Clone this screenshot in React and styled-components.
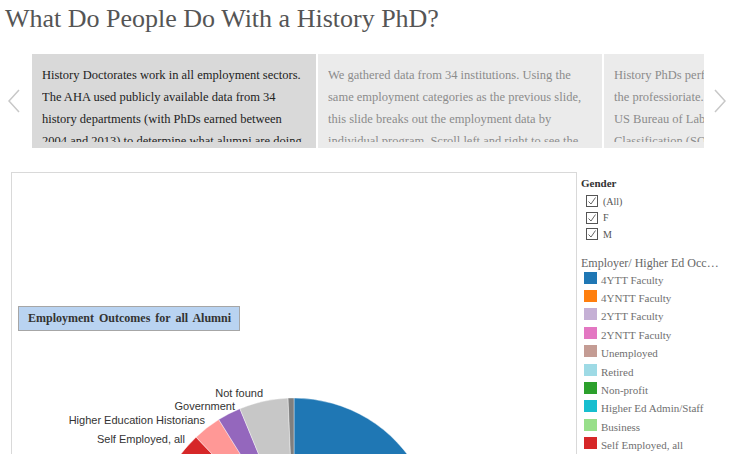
import React from "react";
import styled, { createGlobalStyle } from "styled-components";

const GlobalStyle = createGlobalStyle`
  html, body {
    margin: 0;
    padding: 0;
    height: 454px;
    overflow: hidden;
    background: #fff;
  }
  body {
    font-family: "Liberation Serif", "Times New Roman", serif;
  }
`;

const slides = [
  {
    active: true,
    lines: [
      "History Doctorates work in all employment sectors. The AHA used publicly available data from 34 history departments (with PhDs earned between 2004 and 2013) to determine what alumni are doing now.",
    ],
  },
  {
    lines: [
      "We gathered data from 34 institutions. Using the same employment categories as the previous slide, this slide breaks out the employment data by individual program. Scroll left and right to see the results.",
    ],
  },
  {
    lines: [
      "History PhDs perform a wide range of jobs outside",
      "the professioriate. Using categories from the",
      "US Bureau of Labor Statistics Standard Occupational",
      "Classification (SOC) system, we coded each job.",
    ],
  },
];

const legend = [
  { label: "4YTT Faculty", color: "#1f77b4" },
  { label: "4YNTT Faculty", color: "#ff7f0e" },
  { label: "2YTT Faculty", color: "#c5b0d5" },
  { label: "2YNTT Faculty", color: "#e377c2" },
  { label: "Unemployed", color: "#c49c94" },
  { label: "Retired", color: "#9edae5" },
  { label: "Non-profit", color: "#2ca02c" },
  { label: "Higher Ed Admin/Staff", color: "#17becf" },
  { label: "Business", color: "#98df8a" },
  { label: "Self Employed, all", color: "#d62728" },
  { label: "Higher Education Historians", color: "#ff9896" },
  { label: "Government", color: "#9467bd" },
  { label: "Not found", color: "#c7c7c7" },
  { label: "Other", color: "#7f7f7f" },
];

// slice sizes in degrees, clockwise from 12 o'clock, same order as legend
const sweeps = [125, 45, 15, 7, 4, 8, 18, 33, 35, 26.4, 11.6, 9.6, 20, 2.4];

const CX = 282;
const CY = 200;
const R = 142;

const point = (deg) => {
  const a = ((deg - 90) * Math.PI) / 180;
  return [CX + R * Math.cos(a), CY + R * Math.sin(a)];
};

const slicePath = (from, to) => {
  const [x1, y1] = point(from);
  const [x2, y2] = point(to);
  const large = to - from > 180 ? 1 : 0;
  return `M${CX},${CY} L${x1},${y1} A${R},${R} 0 ${large} 1 ${x2},${y2} Z`;
};

const Page = styled.div`
  width: 736px;
  height: 454px;
  overflow: hidden;
`;

const Title = styled.h1`
  margin: 0;
  padding: 4px 0 0 5px;
  font-size: 26px;
  line-height: 30px;
  font-weight: normal;
  color: #555;
`;

const Carousel = styled.div`
  display: flex;
  align-items: center;
  margin-top: 20px;
  height: 94px;
`;

const Arrow = styled.div`
  width: 32px;
  display: flex;
  justify-content: center;
  box-sizing: border-box;
  padding-right: ${(p) => (p.$left ? "4px" : "0")};
`;

const Track = styled.div`
  width: 672px;
  height: 94px;
  display: flex;
  gap: 2px;
  overflow: hidden;
`;

const Slide = styled.div`
  flex: 0 0 284px;
  height: 94px;
  box-sizing: border-box;
  padding: 10px 10px 0;
  overflow: hidden;
  background: ${(p) => (p.$active ? "#d9d9d9" : "#ebebeb")};
  color: ${(p) => (p.$active ? "#222" : "#8c8c8c")};
  font-size: 12.5px;
  line-height: 22px;
`;

const SlideText = styled.div`
  height: 78px;
  overflow: hidden;
`;

const Line = styled.div`
  white-space: nowrap;
`;

const Main = styled.div`
  display: flex;
  margin-top: 24px;
  padding-left: 11px;
`;

const Frame = styled.div`
  width: 566px;
  height: 320px;
  box-sizing: border-box;
  border: 1px solid #d9d9d9;
  display: flex;
  flex-direction: column;
  align-items: flex-start;
  overflow: hidden;
`;

const ChartTitle = styled.div`
  margin: 133px 0 0 6px;
  width: 222px;
  height: 25px;
  box-sizing: border-box;
  padding-left: 9px;
  background: #b9d3f1;
  border: 1px solid #a6a6a6;
  font-size: 12px;
  font-weight: bold;
  line-height: 23px;
  color: #333;
  word-spacing: 2px;
  white-space: nowrap;
`;

const Pie = styled.svg`
  display: block;
  margin-top: 9px;
  flex: none;
`;

const Side = styled.div`
  margin-left: 4px;
  padding-top: 4px;
  width: 150px;
`;

const Heading = styled.div`
  font-size: ${(p) => (p.$bold ? "11px" : "12px")};
  font-weight: ${(p) => (p.$bold ? "bold" : "normal")};
  color: ${(p) => (p.$bold ? "#333" : "#666")};
  line-height: ${(p) => (p.$bold ? "14px" : "16px")};
  white-space: nowrap;
  margin-top: ${(p) => p.$top || 0}px;
`;

const CheckList = styled.div`
  margin-top: 3px;
`;

const CheckRow = styled.div`
  display: flex;
  align-items: center;
  height: 16.5px;
  padding-left: 5px;
  font-size: 10px;
  color: #555;
  gap: 5px;
`;

const Box = styled.span`
  width: 12px;
  height: 12px;
  box-sizing: border-box;
  border: 1px solid #555;
  display: flex;
  align-items: center;
  justify-content: center;
`;

const LegendRow = styled.div`
  display: flex;
  align-items: center;
  height: 18.4px;
  padding-left: 3px;
  gap: 4px;
  font-size: 11px;
  color: #707070;
  white-space: nowrap;
`;

const Swatch = styled.span`
  width: 13px;
  height: 12px;
  flex: none;
  margin-top: -4px;
  background: ${(p) => p.$color};
`;

const Chevron = ({ left }) => (
  <svg width="12" height="24" viewBox="0 0 12 24">
    <polyline
      points={left ? "11,1 1,12 11,23" : "1,1 11,12 1,23"}
      fill="none"
      stroke="#c8c8c8"
      strokeWidth="1.5"
    />
  </svg>
);

const Check = () => (
  <svg width="10" height="10" viewBox="0 0 10 10">
    <polyline points="1.5,5.5 4,8 8.5,1.5" fill="none" stroke="#666" strokeWidth="1" />
  </svg>
);

const pieLabels = [
  { text: "Not found", x: 251, y: 57 },
  { text: "Government", x: 223, y: 70 },
  { text: "Higher Education Historians", x: 193, y: 84 },
  { text: "Self Employed, all", x: 173, y: 103 },
];

const App = () => {
  let start = 0;
  const slices = sweeps.map((s, i) => {
    const d = slicePath(start, start + s);
    start += s;
    return <path key={i} d={d} fill={legend[i].color} stroke="#fff" strokeWidth="0.4" />;
  });

  return (
    <Page>
      <GlobalStyle />
      <Title>What Do People Do With a History PhD?</Title>

      <Carousel>
        <Arrow $left>
          <Chevron left />
        </Arrow>
        <Track>
          {slides.map((s, i) => (
            <Slide key={i} $active={s.active}>
              <SlideText>
                {s.lines.length === 1
                  ? s.lines[0]
                  : s.lines.map((l) => <Line key={l}>{l}</Line>)}
              </SlideText>
            </Slide>
          ))}
        </Track>
        <Arrow>
          <Chevron />
        </Arrow>
      </Carousel>

      <Main>
        <Frame>
          <ChartTitle>Employment Outcomes for all Alumni</ChartTitle>
          <Pie width="564" height="360" viewBox="0 0 564 360">
            {slices}
            {pieLabels.map((l) => (
              <text
                key={l.text}
                x={l.x}
                y={l.y}
                textAnchor="end"
                fontFamily="'Liberation Sans', Arial, sans-serif"
                fontSize="11"
                fill="#333"
              >
                {l.text}
              </text>
            ))}
          </Pie>
        </Frame>

        <Side>
          <Heading $bold>Gender</Heading>
          <CheckList>
            {["(All)", "F", "M"].map((g) => (
              <CheckRow key={g}>
                <Box>
                  <Check />
                </Box>
                {g}
              </CheckRow>
            ))}
          </CheckList>
          <Heading $top={12}>Employer/ Higher Ed Occ…</Heading>
          {legend.slice(0, 11).map((l) => (
            <LegendRow key={l.label}>
              <Swatch $color={l.color} />
              {l.label}
            </LegendRow>
          ))}
        </Side>
      </Main>
    </Page>
  );
};

export default App;
